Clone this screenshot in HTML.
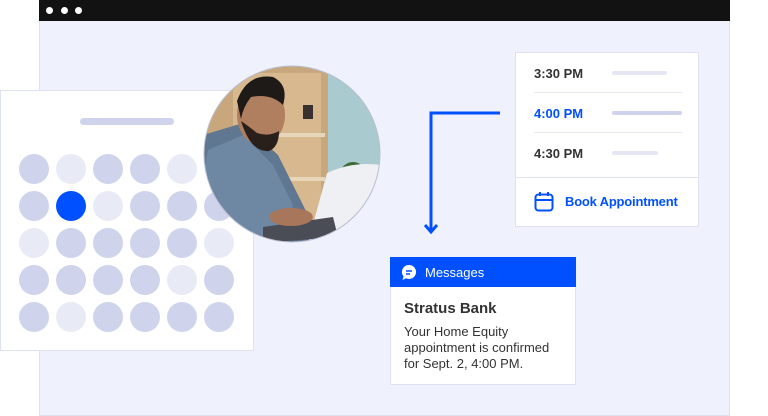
<!DOCTYPE html>
<html><head><meta charset="utf-8"><style>
*{margin:0;padding:0;box-sizing:border-box}
body{width:768px;height:416px;background:#fff;position:relative;overflow:hidden;font-family:"Liberation Sans",sans-serif}
.abs{position:absolute}
.frame{left:39px;top:0;width:691px;height:416px;background:#eff2fd;border:1px solid #dde1f0}
.bar{left:39px;top:0;width:691px;height:21px;background:#121212}
.dot{width:7px;height:7px;border-radius:50%;background:#fff;top:7px}
.cal{left:0;top:90px;width:254px;height:261px;background:#fff;border:1px solid #dde1f2}
.c{position:absolute;width:30px;height:30px;border-radius:50%}
.D{background:#cfd4ec}.L{background:#e8ebf6}.B{background:#0050ff}
.card{left:515px;top:52px;width:184px;height:175px;background:#fff;border:1px solid #dde1f2}
.t{position:absolute;left:18px;font-weight:bold;font-size:13px;color:#333}
.ln{position:absolute;height:4px;border-radius:2px;background:#e4e7f3}
.sep{position:absolute;left:18px;width:149px;height:1px;background:#e6e8f2}
.msg{left:390px;top:257px;width:186px;height:128px;background:#fff;border:1px solid #dde1f2}
</style></head><body>
<div class="abs frame"></div>
<div class="abs bar"></div>
<div class="abs dot" style="left:46px"></div>
<div class="abs dot" style="left:61px"></div>
<div class="abs dot" style="left:75px"></div>

<div class="abs cal">
<div class="abs" style="left:79px;top:27px;width:94px;height:7px;border-radius:4px;background:#cfd4ec"></div>
<div class="c D" style="left:18px;top:63px"></div><div class="c L" style="left:55px;top:63px"></div><div class="c D" style="left:92px;top:63px"></div><div class="c D" style="left:129px;top:63px"></div><div class="c L" style="left:166px;top:63px"></div>
<div class="c D" style="left:18px;top:100px"></div><div class="c B" style="left:55px;top:100px"></div><div class="c L" style="left:92px;top:100px"></div><div class="c D" style="left:129px;top:100px"></div><div class="c D" style="left:166px;top:100px"></div><div class="c D" style="left:203px;top:100px"></div>
<div class="c L" style="left:18px;top:137px"></div><div class="c D" style="left:55px;top:137px"></div><div class="c D" style="left:92px;top:137px"></div><div class="c D" style="left:129px;top:137px"></div><div class="c D" style="left:166px;top:137px"></div><div class="c L" style="left:203px;top:137px"></div>
<div class="c D" style="left:18px;top:174px"></div><div class="c D" style="left:55px;top:174px"></div><div class="c D" style="left:92px;top:174px"></div><div class="c D" style="left:129px;top:174px"></div><div class="c L" style="left:166px;top:174px"></div><div class="c D" style="left:203px;top:174px"></div>
<div class="c D" style="left:18px;top:211px"></div><div class="c L" style="left:55px;top:211px"></div><div class="c D" style="left:92px;top:211px"></div><div class="c D" style="left:129px;top:211px"></div><div class="c D" style="left:166px;top:211px"></div><div class="c D" style="left:203px;top:211px"></div>
</div>

<svg class="abs" style="left:203px;top:65px" width="178" height="178" viewBox="0 0 178 178">
<defs><clipPath id="cp"><circle cx="89" cy="89" r="88"/></clipPath></defs>
<g clip-path="url(#cp)">
<rect width="178" height="178" fill="#b9d2d3"/>
<rect x="0" y="0" width="125" height="178" fill="#c9a77c"/>
<rect x="30" y="8" width="88" height="150" fill="#d8b88e"/>
<rect x="30" y="68" width="92" height="4" fill="#e8d6bb"/>
<rect x="30" y="112" width="92" height="4" fill="#e8d6bb"/>
<rect x="125" y="0" width="53" height="178" fill="#a9cbcf"/>
<rect x="100" y="40" width="10" height="14" fill="#3a3030"/>
<circle cx="150" cy="110" r="13" fill="#3f6a35"/>
<path d="M0 70 L40 58 L75 90 L95 130 L110 160 L115 178 L0 178Z" fill="#5f7791"/>
<path d="M5 85 L40 70 L70 100 L90 140 L80 178 L0 178 L0 110Z" fill="#6e87a3"/>
<ellipse cx="58" cy="50" rx="24" ry="30" fill="#b07f5f"/>
<path d="M34 36 Q44 8 70 12 Q86 20 80 40 Q68 28 48 32 Q40 42 38 54Z" fill="#1e1a18"/>
<path d="M38 56 Q48 88 66 86 Q76 82 76 66 Q66 72 54 68 Q44 60 38 56Z" fill="#2a201b"/>
<path d="M105 178 L124 108 Q150 96 178 100 L178 178Z" fill="#eef0f4"/>
<path d="M60 162 L130 152 L135 172 L60 178Z" fill="#4a4d55"/>
<ellipse cx="88" cy="152" rx="22" ry="9" fill="#a8765a"/>
</g>
<circle cx="89" cy="89" r="88" fill="none" stroke="#b8bdd0" stroke-width="1"/>
</svg>

<svg class="abs" style="left:420px;top:105px" width="90" height="135">
<path d="M80 8 H11 V126" fill="none" stroke="#0050ff" stroke-width="3"/>
<path d="M5 120 L11 127 L17 120" fill="none" stroke="#0050ff" stroke-width="3"/>
</svg>

<div class="abs card">
<div class="t" style="top:13px">3:30 PM</div><div class="ln" style="left:96px;top:18px;width:55px"></div>
<div class="sep" style="top:39px"></div>
<div class="t" style="top:53px;color:#0050ff">4:00 PM</div><div class="ln" style="left:96px;top:58px;width:70px;background:#cfd4ec"></div>
<div class="sep" style="top:79px"></div>
<div class="t" style="top:93px">4:30 PM</div><div class="ln" style="left:96px;top:98px;width:46px"></div>
<div class="abs" style="left:0;top:124px;width:182px;height:1px;background:#dde1f2"></div>
<svg class="abs" style="left:18px;top:138px" width="20" height="21" viewBox="0 0 20 21"><rect x="1.5" y="3.5" width="17" height="16" rx="3" fill="none" stroke="#0050ff" stroke-width="2"/><path d="M1.5 9H18.5M6 1V5M14 1V5" stroke="#0050ff" stroke-width="2"/></svg>
<div class="abs" style="left:49px;top:141px;font-weight:bold;font-size:13px;color:#0050ff;letter-spacing:-0.2px">Book Appointment</div>
</div>

<div class="abs msg">
<div class="abs" style="left:-1px;top:-1px;width:186px;height:30px;background:#0050ff"></div>
<svg class="abs" style="left:10px;top:6px" width="16" height="17" viewBox="0 0 16 17"><path d="M8 1a7 7 0 1 1-3 13.3L1.5 16 2.6 12.5A7 7 0 0 1 8 1z" fill="#fff"/><path d="M5 7h6M5 10h4" stroke="#0050ff" stroke-width="1.5"/></svg>
<div class="abs" style="left:34px;top:7px;color:#fff;font-size:13px">Messages</div>
<div class="abs" style="left:13px;top:42px;font-weight:bold;font-size:15px;color:#333">Stratus Bank</div>
<div class="abs" style="left:13px;top:66px;font-size:13px;line-height:16px;color:#333">Your Home Equity<br>appointment is confirmed<br>for Sept. 2, 4:00 PM.</div>
</div>
</body></html>
